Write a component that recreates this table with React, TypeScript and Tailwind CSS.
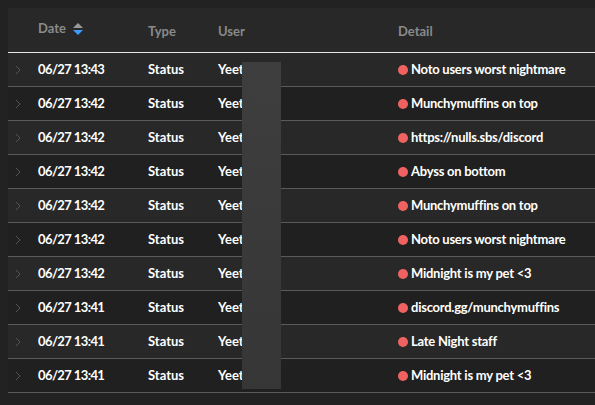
const rows = [
  { date: '06/27 13:43', detail: 'Noto users worst nightmare' },
  { date: '06/27 13:42', detail: 'Munchymuffins on top' },
  { date: '06/27 13:42', detail: 'https://nulls.sbs/discord' },
  { date: '06/27 13:42', detail: 'Abyss on bottom' },
  { date: '06/27 13:42', detail: 'Munchymuffins on top' },
  { date: '06/27 13:42', detail: 'Noto users worst nightmare' },
  { date: '06/27 13:42', detail: 'Midnight is my pet <3' },
  { date: '06/27 13:41', detail: 'discord.gg/munchymuffins' },
  { date: '06/27 13:41', detail: 'Late Night staff' },
  { date: '06/27 13:41', detail: 'Midnight is my pet <3' },
];

function SortIcon() {
  return (
    <svg width="10" height="12" viewBox="0 0 10 12" className="ml-[7px]">
      <path d="M5 0 L10 5 L0 5 Z" fill="#9a9a9a" />
      <path d="M0 7 L10 7 L5 12 Z" fill="#3d9bff" />
    </svg>
  );
}

export default function App() {
  return (
    <div
      className="w-[595px] h-[405px] bg-[#222222] pt-2 pl-2 overflow-hidden"
      style={{ fontFamily: 'Lato, "Open Sans", sans-serif' }}
    >
      <div className="relative bg-[#282828] w-full">
        <div className="flex h-[45px] border-b border-[#e6e6e6] text-[13px] font-bold text-[#8a8a8a]">
          <div className="w-[30px]" />
          <div className="w-[110px] flex items-center pb-[3px]">
            Date
            <SortIcon />
          </div>
          <div className="w-[70px] flex items-center pt-[3px]">Type</div>
          <div className="w-[180px] flex items-center pt-[3px]">User</div>
          <div className="flex-1 flex items-center pt-[3px]">Detail</div>
        </div>
        {rows.map((r, i) => (
          <div
            key={i}
            className={`flex h-[34px] border-b border-[#5a5a5a] text-[13px] font-bold text-white ${
              i % 2 === 0 ? 'bg-[#282828]' : 'bg-[#202020]'
            }`}
          >
            <div className="w-[30px] flex items-center pl-[7px]">
              <svg width="6" height="10" viewBox="0 0 6 10">
                <path d="M1 1 L5 5 L1 9" stroke="#555" strokeWidth="1" fill="none" />
              </svg>
            </div>
            <div className="w-[110px] flex items-center tracking-[-0.6px]">{r.date}</div>
            <div className="w-[70px] flex items-center">Status</div>
            <div className="w-[180px] flex items-center">Yeet</div>
            <div className="flex-1 flex items-center tracking-[-0.25px]">
              <span className="w-[10px] h-[10px] rounded-full bg-[#f06262] mr-[3px]" />
              {r.detail}
            </div>
          </div>
        ))}
        <div className="absolute left-[234px] top-[54px] w-[39px] h-[327px] bg-gradient-to-b from-[#3e3e3e] to-[#363636]" />
      </div>
    </div>
  );
}
